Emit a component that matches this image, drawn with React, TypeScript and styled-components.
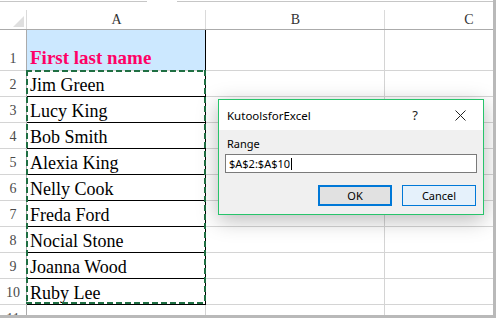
import React from "react";
import styled, { createGlobalStyle } from "styled-components";

const Global = createGlobalStyle`
  html, body { margin: 0; padding: 0; background: #fff; }
  #root { width: 496px; height: 318px; }
`;

const Frame = styled.div`
  position: relative;
  width: 496px;
  height: 318px;
  box-sizing: border-box;
  border-right: 3px solid #b9b9b9;
  border-bottom: 3px solid #b9b9b9;
  overflow: hidden;
  background: #fff;
`;

const TopEdge = styled.div`
  display: flex;
  gap: 30px;
  height: 2px;
  box-sizing: border-box;
  padding-top: 1px;
`;

const EdgeSeg = styled.div<{ $w?: number }>`
  height: 1px;
  background: #c6c6c6;
  ${(p) => (p.$w ? `width: ${p.$w}px;` : "flex: 1;")}
`;

const Sheet = styled.div`
  position: relative;
  display: grid;
  grid-template-columns: 27px 179px 179px 168px;
  grid-template-rows: 28px 41px repeat(10, 26px);
`;

const ColHeader = styled.div`
  box-sizing: border-box;
  border-bottom: 1px solid #ababab;
  display: flex;
  align-items: flex-end;
  justify-content: center;
  padding-bottom: 2px;
  font-family: "Liberation Serif", serif;
  font-size: 14px;
  line-height: 14px;
  color: #333;
  background: linear-gradient(#dadada, #dadada) right bottom / 1px 19px no-repeat;
`;

const Corner = styled(ColHeader)`
  position: relative;
  justify-content: flex-end;
  align-items: flex-end;
  padding: 0 3px 2px 0;
`;

const CornerTriangle = styled.span`
  display: block;
  width: 11px;
  height: 11px;
  background: #dfdfdf;
  clip-path: polygon(100% 0, 100% 100%, 0 100%);
`;

const RowHeader = styled.div`
  box-sizing: border-box;
  border-right: 1px solid #ababab;
  border-bottom: 1px solid #d4d4d4;
  display: flex;
  align-items: flex-end;
  justify-content: center;
  padding-bottom: 4px;
  font-family: "Liberation Serif", serif;
  font-size: 14px;
  line-height: 14px;
  color: #4a4a4a;
`;

type Kind = "title" | "boxed" | "plain";

const Cell = styled.div<{ $kind: Kind }>`
  box-sizing: border-box;
  border-right: 1px solid ${(p) => (p.$kind === "plain" ? "#d4d4d4" : "#000")};
  border-bottom: 1px solid ${(p) => (p.$kind === "boxed" ? "#000" : "#d4d4d4")};
  background: ${(p) => (p.$kind === "title" ? "#cce8ff" : "#fff")};
  display: flex;
  align-items: flex-end;
  padding: 0 0 ${(p) => (p.$kind === "title" ? "3px" : "2px")} 3px;
  font-family: "Liberation Serif", serif;
  font-size: ${(p) => (p.$kind === "title" ? "19px" : "18px")};
  line-height: ${(p) => (p.$kind === "title" ? "19px" : "18px")};
  font-weight: ${(p) => (p.$kind === "title" ? 700 : 400)};
  color: ${(p) => (p.$kind === "title" ? "#ff0066" : "#000")};
  white-space: nowrap;
  overflow: hidden;
`;

const MarchingAnts = styled.div`
  position: absolute;
  left: 26px;
  top: 68px;
  width: 180px;
  height: 234px;
  pointer-events: none;
  background:
    repeating-linear-gradient(90deg, #1f6f43 0 6px, transparent 6px 9px) left top / 100% 2px no-repeat,
    repeating-linear-gradient(90deg, #1f6f43 0 6px, transparent 6px 9px) left bottom / 100% 2px no-repeat,
    repeating-linear-gradient(180deg, #1f6f43 0 6px, transparent 6px 9px) left top / 2px 100% no-repeat,
    repeating-linear-gradient(180deg, #1f6f43 0 6px, transparent 6px 9px) right top / 2px 100% no-repeat;
`;

const Dialog = styled.div`
  position: absolute;
  left: 218px;
  top: 99px;
  width: 266px;
  height: 116px;
  box-sizing: border-box;
  border: 1px solid #27c46b;
  background: #f0f0f0;
  box-shadow: 0 5px 20px rgba(0, 0, 0, 0.28);
  display: flex;
  flex-direction: column;
  font-family: "Noto Sans", sans-serif;
  font-size: 11px;
  color: #000;
`;

const TitleBar = styled.div`
  height: 30px;
  background: #fff;
  display: flex;
  align-items: center;
  padding: 0 5px 0 8px;
`;

const Title = styled.div`
  flex: 1;
  font-size: 11.5px;
`;

const TitleButton = styled.div<{ $gap?: number }>`
  width: 36px;
  height: 30px;
  display: flex;
  align-items: center;
  justify-content: center;
  margin-right: ${(p) => p.$gap ?? 0}px;
  font-size: 13px;
  color: #222;
`;

const Body = styled.div`
  flex: 1;
  display: flex;
  flex-direction: column;
  padding: 6px 6px 8px 6px;
`;

const Label = styled.div`
  height: 16px;
  line-height: 16px;
  margin: 0 0 2px 2px;
`;

const Input = styled.div`
  height: 19px;
  box-sizing: border-box;
  border: 1px solid #7a7a7a;
  background: #fff;
  display: flex;
  align-items: center;
  padding-left: 3px;
`;

const Caret = styled.span`
  display: inline-block;
  width: 1px;
  height: 12px;
  background: #000;
  margin-left: 1px;
`;

const ButtonRow = styled.div`
  display: flex;
  justify-content: flex-end;
  gap: 10px;
  margin-top: 12px;
  padding-right: 1px;
`;

const Button = styled.div<{ $primary?: boolean }>`
  width: 74px;
  height: 21px;
  box-sizing: border-box;
  border: ${(p) => (p.$primary ? "2px" : "1px")} solid #0078d7;
  background: ${(p) => (p.$primary ? "#e1e1e1" : "#e5f1fb")};
  display: flex;
  align-items: center;
  justify-content: center;
`;

const names = [
  "Jim Green",
  "Lucy King",
  "Bob Smith",
  "Alexia King",
  "Nelly Cook",
  "Freda Ford",
  "Nocial Stone",
  "Joanna Wood",
  "Ruby Lee",
];

export default function App() {
  const rows: { a: string; kind: Kind }[] = [
    { a: "First last name", kind: "title" },
    ...names.map((n) => ({ a: n, kind: "boxed" as Kind })),
    { a: "", kind: "plain" },
  ];
  return (
    <>
      <Global />
      <Frame>
        <TopEdge>
          <EdgeSeg $w={147} />
          <EdgeSeg />
        </TopEdge>
        <Sheet>
          <Corner>
            <CornerTriangle />
          </Corner>
          <ColHeader>A</ColHeader>
          <ColHeader>B</ColHeader>
          <ColHeader>C</ColHeader>
          {rows.map((r, i) => (
            <React.Fragment key={i}>
              <RowHeader>{i + 1}</RowHeader>
              <Cell $kind={r.kind}>{r.a}</Cell>
              <Cell $kind="plain" />
              <Cell $kind="plain" />
            </React.Fragment>
          ))}
          <MarchingAnts />
        </Sheet>
        <Dialog>
          <TitleBar>
            <Title>KutoolsforExcel</Title>
            <TitleButton $gap={9}>?</TitleButton>
            <TitleButton>
              <svg width="11" height="11" viewBox="0 0 11 11">
                <path d="M0.5 0.5 L10.5 10.5 M10.5 0.5 L0.5 10.5" stroke="#222" strokeWidth="1" fill="none" />
              </svg>
            </TitleButton>
          </TitleBar>
          <Body>
            <Label>Range</Label>
            <Input>
              $A$2:$A$10
              <Caret />
            </Input>
            <ButtonRow>
              <Button $primary>OK</Button>
              <Button>Cancel</Button>
            </ButtonRow>
          </Body>
        </Dialog>
      </Frame>
    </>
  );
}
